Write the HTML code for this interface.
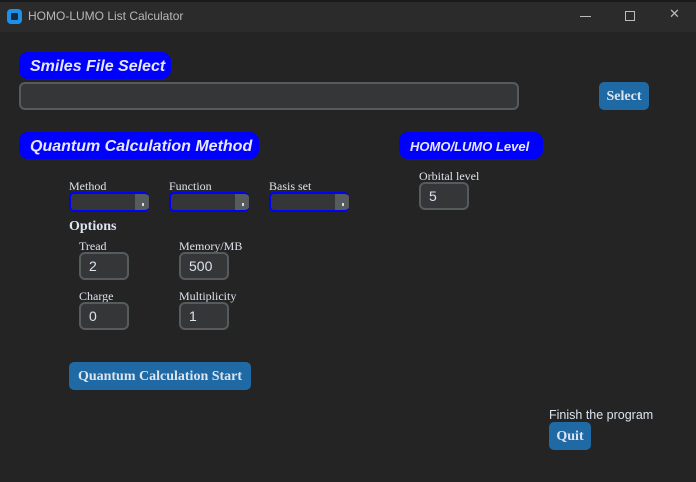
<!DOCTYPE html>
<html><head><style>
*{margin:0;padding:0;box-sizing:border-box}
body{width:696px;height:482px;background:#242424;position:relative;overflow:hidden;font-family:"Liberation Serif",serif;color:#dce4ee}
.a{position:absolute}
.tb{left:0;top:0;width:696px;height:32px;background:#2b2b2b;border-top:2px solid #1a1a1a}
.pill{background:#0000ff;border-radius:9px;color:#e6e6ff;font-family:"Liberation Sans",sans-serif;font-style:italic;font-weight:bold;font-size:16px;line-height:29px;padding-left:11px;height:27px}
.ent{background:#343638;border:2px solid #565b5e;border-radius:6px;font-family:"Liberation Sans",sans-serif;font-size:14px;color:#dce4ee;padding-left:8px;line-height:25px}
.btn{background:#1f6aa5;border-radius:5px;color:#dce4ee;font-weight:bold;font-size:14px;text-align:center;line-height:29px}
.lbl{font-size:12px;color:#dce4ee}
.cb{height:20px;width:80px;background:#343638;border-radius:5px;border-left:2px solid #0000ff;border-top:2px solid #0000ff;border-bottom:2px solid #0000ff;overflow:hidden}
.cb::after{content:"";position:absolute;right:0;top:-2px;width:14px;height:20px;background:#565b5e;border-radius:0 5px 5px 0}
.cb::before{content:"";position:absolute;right:5px;top:9px;width:2px;height:3px;background:#ddd;z-index:2}
</style></head><body>
<div class="a tb"></div>
<div class="a" style="left:7px;top:9px;width:15px;height:15px;background:#1e90e8;border-radius:4px"></div>
<div class="a" style="left:11px;top:13px;width:7px;height:7px;background:#1a2a3a;border-radius:1px"></div>
<div class="a" style="left:28px;top:9px;font-family:'Liberation Sans',sans-serif;font-size:12px;color:#b8b8b8">HOMO-LUMO List Calculator</div>
<div class="a" style="left:580px;top:16px;width:11px;height:1px;background:#bbb"></div>
<div class="a" style="left:625px;top:11px;width:10px;height:10px;border:1px solid #bbb"></div>
<div class="a" style="left:669px;top:7px;font-family:'DejaVu Sans',sans-serif;font-size:13px;color:#bbb">✕</div>

<div class="a pill" style="left:19px;top:52px;width:152px">Smiles File Select</div>
<div class="a ent" style="left:19px;top:82px;width:500px;height:28px"></div>
<div class="a btn" style="left:599px;top:82px;width:50px;height:28px">Select</div>

<div class="a pill" style="left:19px;top:132px;width:240px">Quantum Calculation Method</div>
<div class="a pill" style="left:399px;top:132px;width:144px;font-size:13px">HOMO/LUMO Level</div>

<div class="a lbl" style="left:69px;top:179px">Method</div>
<div class="a lbl" style="left:169px;top:179px">Function</div>
<div class="a lbl" style="left:269px;top:179px">Basis set</div>
<div class="a cb" style="left:69px;top:192px"></div>
<div class="a cb" style="left:169px;top:192px"></div>
<div class="a cb" style="left:269px;top:192px"></div>

<div class="a" style="left:69px;top:219px;font-weight:bold;font-size:14px">Options</div>
<div class="a lbl" style="left:79px;top:239px">Tread</div>
<div class="a lbl" style="left:179px;top:239px">Memory/MB</div>
<div class="a ent" style="left:79px;top:252px;width:50px;height:28px">2</div>
<div class="a ent" style="left:179px;top:252px;width:50px;height:28px">500</div>
<div class="a lbl" style="left:79px;top:289px">Charge</div>
<div class="a lbl" style="left:179px;top:289px">Multiplicity</div>
<div class="a ent" style="left:79px;top:302px;width:50px;height:28px">0</div>
<div class="a ent" style="left:179px;top:302px;width:50px;height:28px">1</div>

<div class="a lbl" style="left:419px;top:169px">Orbital level</div>
<div class="a ent" style="left:419px;top:182px;width:50px;height:28px">5</div>

<div class="a btn" style="left:69px;top:362px;width:182px;height:28px">Quantum Calculation Start</div>
<div class="a" style="left:549px;top:408px;font-family:'Liberation Sans',sans-serif;font-size:12.5px;color:#dce4ee">Finish the program</div>
<div class="a btn" style="left:549px;top:422px;width:42px;height:28px">Quit</div>
</body></html>
